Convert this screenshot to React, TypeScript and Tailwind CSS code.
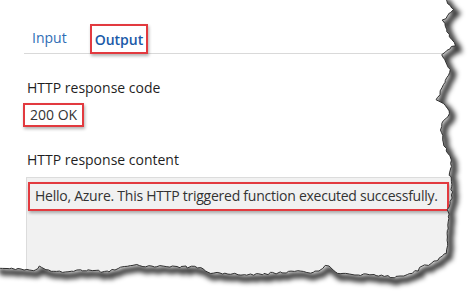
import React from 'react';

// torn-paper edge: key points along the right side, then the bottom, right to left
const KEY_POINTS: [number, number][] = [
  [443, -4], [453, 10], [443, 20], [447, 32], [455, 45], [442, 55], [450, 70], [443, 85],
  [437, 100], [450, 110], [440, 130], [445, 145], [452, 160], [450, 175], [452, 195],
  [448, 210], [448, 222], [447, 237], [447, 253], [433, 262], [423, 267], [413, 273],
  [397, 277], [367, 275], [337, 273], [328, 265], [313, 273], [300, 271], [253, 275],
  [207, 273], [200, 267], [167, 267], [133, 265], [107, 272], [83, 270], [53, 272],
  [40, 267], [33, 270], [0, 268], [-4, 268],
];

const buildEdge = () => {
  let seed = 7;
  const rand = () => {
    seed = (seed * 16807) % 2147483647;
    return seed / 2147483647 - 0.5;
  };
  const pts: [number, number][] = [];
  for (let i = 0; i < KEY_POINTS.length - 1; i++) {
    const [x1, y1] = KEY_POINTS[i];
    const [x2, y2] = KEY_POINTS[i + 1];
    const steps = Math.max(2, Math.round(Math.hypot(x2 - x1, y2 - y1) / 3));
    for (let s = 0; s < steps; s++) {
      const t = s / steps;
      pts.push([x1 + (x2 - x1) * t + rand() * 2.2, y1 + (y2 - y1) * t + rand() * 2.2]);
    }
  }
  pts.push(KEY_POINTS[KEY_POINTS.length - 1]);
  return pts;
};

const TornEdge: React.FC = () => {
  const pts = buildEdge();
  const line = pts.map((p, i) => `${i ? 'L' : 'M'}${p[0].toFixed(1)} ${p[1].toFixed(1)}`).join(' ');
  const outside = `${line} L-4 302 L478 302 L478 -4 Z`;
  return (
    <svg className="absolute inset-0 pointer-events-none" width="474" height="298" viewBox="0 0 474 298">
      <defs>
        <filter id="tornBlur" x="-10%" y="-10%" width="120%" height="120%">
          <feGaussianBlur stdDeviation="2.4" />
        </filter>
        <clipPath id="outsideClip">
          <path d={outside} />
        </clipPath>
      </defs>
      <path d={outside} fill="#ffffff" />
      <g clipPath="url(#outsideClip)">
        <path d={line} fill="none" stroke="rgba(0,0,0,0.8)" strokeWidth="6" transform="translate(3 4)" filter="url(#tornBlur)" />
      </g>
      <path d={line} fill="none" stroke="#2e2e2e" strokeWidth="1" />
    </svg>
  );
};

const App: React.FC = () => {
  return (
    <div className="relative w-[474px] h-[298px] overflow-hidden bg-white font-['Open_Sans','Noto_Sans',sans-serif] text-[14px] text-[#262626]">
      <div className="pl-[24px] pt-[24px]">
        <div className="flex h-[30px] border-b border-[#d9d9d9]">
          <span className="ml-[8px] pt-[3px] text-[#2f6db5]">Input</span>
          <span className="ml-[23px] -mb-px px-[3px] pt-[3px] border-2 border-[#e23a3f] shadow-[1px_2px_3px_rgba(0,0,0,0.3)] font-semibold text-[#1a5aa8]">
            Output
          </span>
        </div>
      </div>

      <div className="pl-[27px] pt-[24px]">
        <p className="leading-[20px] text-[#1f1f1f]">HTTP response code</p>
        <div className="mt-[5px] -ml-[4px] inline-block border-2 border-[#e23a3f] shadow-[1px_2px_3px_rgba(0,0,0,0.3)] px-[5px] h-[24px] leading-[20px] text-[#333]">
          200 OK
        </div>
        <p className="mt-[23px] leading-[20px] text-[#1f1f1f]">HTTP response content</p>
        <div className="mt-[7px] -ml-[1px] h-[110px] bg-[#f1f1f1] border-t border-l border-[#dcdcdc] pt-[4px] pl-[1px]">
          <div className="w-[421px] h-[29px] border-2 border-[#e23a3f] shadow-[1px_2px_3px_rgba(0,0,0,0.3)] pl-[5px] leading-[24px] tracking-[-0.25px] text-[#333] whitespace-nowrap">
            Hello, Azure. This HTTP triggered function executed successfully.
          </div>
        </div>
      </div>

      <TornEdge />
    </div>
  );
};

export default App;
